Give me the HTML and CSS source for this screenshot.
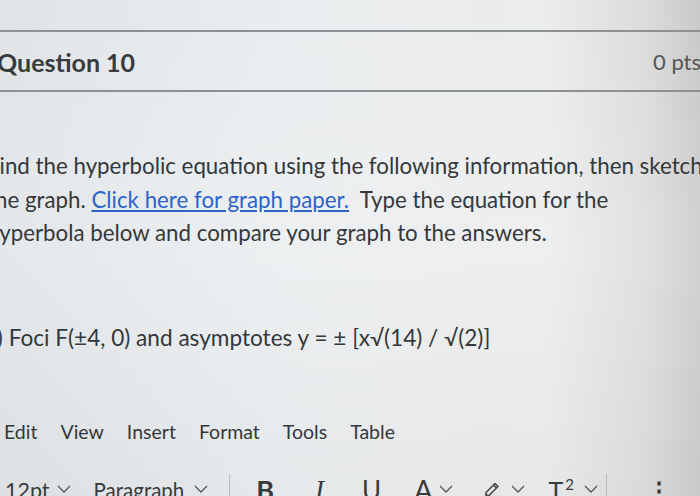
FILE: index.html
```html
<!DOCTYPE html>
<html>
<head>
<meta charset="utf-8">
<link rel="stylesheet" href="styles.css">
</head>
<body>
<div class="page">
  <div class="top"></div>
  <div class="qhead">
    <div class="qtitle">Question 10</div>
    <div class="qpts">0 pts</div>
  </div>
  <div class="qbody">
    <p class="para">Find the hyperbolic equation using the following information, then sketch<br>the graph. <a class="link" href="#">Click here for graph paper.</a>&nbsp; Type the equation for the<br>hyperbola below and compare your graph to the answers.</p>
    <p class="foci">a) Foci F(±4, 0) and asymptotes y = ± [x√(14) / √(2)]</p>
  </div>
  <div class="menubar">
    <span>Edit</span><span>View</span><span>Insert</span><span>Format</span><span>Tools</span><span>Table</span>
  </div>
  <div class="toolbar">
    <span class="tool t12">12pt<svg class="chev" width="14" height="9" viewBox="0 0 14 9"><polyline points="1,1 7,7 13,1" fill="none" stroke="#555" stroke-width="1.3"/></svg></span>
    <span class="tool tpara">Paragraph<svg class="chev c10" width="14" height="9" viewBox="0 0 14 9"><polyline points="1,1 7,7 13,1" fill="none" stroke="#555" stroke-width="1.3"/></svg></span>
    <span class="sep"></span>
    <span class="tool b">B</span>
    <span class="tool i">I</span>
    <span class="tool u">U</span>
    <span class="tool ta">A<svg class="chev" width="14" height="9" viewBox="0 0 14 9"><polyline points="1,1 7,7 13,1" fill="none" stroke="#555" stroke-width="1.3"/></svg></span>
    <span class="tool tpen"><svg class="pen" width="20" height="20" viewBox="0 0 20 20"><path d="M5 16 L5 12.5 L12.5 5 L15.5 8 L8 15.5 Z M12.5 5 L14 3.5 L17 6.5 L15.5 8" fill="none" stroke="#4a4a4a" stroke-width="1.6" stroke-linejoin="round"/><path d="M5 16 L5 13 L8 16 Z" fill="#4a4a4a"/></svg><svg class="chev c10" width="14" height="9" viewBox="0 0 14 9"><polyline points="1,1 7,7 13,1" fill="none" stroke="#555" stroke-width="1.3"/></svg></span>
    <span class="tool tsup">T<sup>2</sup><svg class="chev c10" width="14" height="9" viewBox="0 0 14 9"><polyline points="1,1 7,7 13,1" fill="none" stroke="#555" stroke-width="1.3"/></svg></span>
    <span class="sep sep2"></span>
    <span class="tool dots">⋮</span>
  </div>
</div>
</body>
</html>
```
FILE: styles.css
```css
html, body {
  margin: 0;
  padding: 0;
}
body {
  width: 700px;
  height: 496px;
  overflow: hidden;
  font-family: Lato, "Open Sans", sans-serif;
  color: #34383b;
  background: linear-gradient(to right, #e0e4e7 0%, #eaedef 40%, #ebecec 78%, #dcdcdc 92%, #c9c9c9 100%);
}
.page {
  width: 700px;
  height: 496px;
  overflow: hidden;
  background: linear-gradient(to bottom, rgba(255,255,255,0) 0%, rgba(255,255,255,0.15) 50%, rgba(200,200,200,0.12) 100%);
}
.top {
  height: 30px;
  border-bottom: 2px solid #8e9193;
}
.qhead {
  height: 57px;
  border-bottom: 2px solid #8e9193;
  display: flex;
  justify-content: space-between;
  align-items: center;
  padding-top: 1px;
}
.qtitle {
  font-size: 25px;
  font-weight: 700;
  margin-left: -3px;
  color: #383b3e;
}
.qpts {
  font-size: 22px;
  color: #555;
  margin-right: -1px;
}
.qbody {
  padding-top: 57px;
}
.para {
  margin: 0 0 0 -13px;
  font-size: 22.3px;
  line-height: 33.5px;
  white-space: nowrap;
}
.link {
  color: #2a64c8;
  text-decoration: underline;
}
.foci {
  margin: 71px 0 0 -14px;
  font-size: 22.6px;
  line-height: 34px;
  white-space: nowrap;
}
.menubar {
  margin-top: 65px;
  margin-left: 4px;
  display: flex;
  gap: 23px;
  font-size: 19.5px;
  line-height: 24px;
}
.toolbar {
  margin-top: 30px;
  display: flex;
  align-items: center;
  font-size: 20.5px;
  line-height: 24px;
  color: #3a3a3a;
  margin-left: 5px;
}
.tool {
  display: flex;
  align-items: center;
}
.chev {
  margin-left: 7px;
}
.c10 { margin-left: 10px; }
.t12 { font-size: 21.5px; margin-right: 23px; }
.tpara { margin-right: 21px; }
.sep {
  width: 1px;
  height: 32px;
  background: #bbb;
  margin-right: 26px;
}
.b { font-weight: 700; font-size: 27px; margin-right: 41px; }
.i { font-family: "Liberation Serif", serif; font-style: italic; font-size: 27px; margin-right: 38px; }
.u { font-size: 26px; margin-right: 33px; }
.ta { font-size: 27px; margin-right: 28px; }
.tpen { margin-right: 23px; }
.tsup { font-size: 25px; margin-right: 8px; }
sup { font-size: 15px; margin-top: -12px; margin-left: 2px; }
.sep2 { margin-right: 40px; }
.dots { font-size: 24px; font-weight: 700; }
```
